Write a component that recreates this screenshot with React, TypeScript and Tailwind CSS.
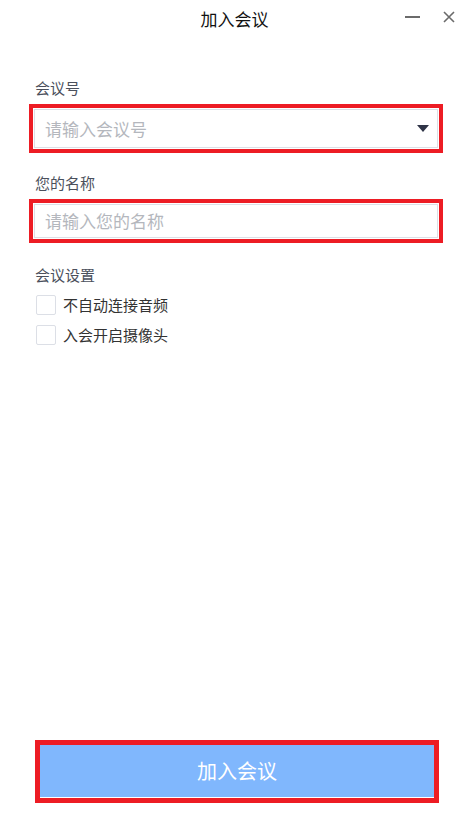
const font = { fontFamily: '"Noto Sans CJK SC", "Noto Sans", sans-serif' };

const Field = ({
  label,
  placeholder,
  tall,
  dropdown,
}: {
  label: string;
  placeholder: string;
  tall?: boolean;
  dropdown?: boolean;
}) => (
  <div className="flex flex-col">
    <span className="pl-[35px] text-[15px] leading-[20px] text-[#4b505c]">{label}</span>
    <div className="mt-[6px] ml-[29px] w-[414px] border-[4px] border-[#ed1c24] p-[1px]">
      <div
        className={`flex items-center justify-between border border-[#dcdfe6] bg-white pl-[10px] pr-[8px] ${
          tall ? "h-[39px]" : "h-[34px]"
        }`}
      >
        <span className="text-[17px] text-[#b4b7bd]">{placeholder}</span>
        {dropdown && (
          <svg width="12" height="7" viewBox="0 0 12 7">
            <path d="M0 0 H12 L6 7 Z" fill="#2f3447" />
          </svg>
        )}
      </div>
    </div>
  </div>
);

const Check = ({ text }: { text: string }) => (
  <div className="flex items-center gap-[7px] pl-[36px]">
    <div className="h-[20px] w-[20px] rounded-[2px] border border-[#dcdfe6] bg-white" />
    <span className="text-[15px] leading-[20px] text-[#333]">{text}</span>
  </div>
);

export default function App() {
  return (
    <div className="flex h-[833px] w-[469px] flex-col bg-white" style={font}>
      <div className="relative flex h-[38px] items-center justify-center">
        <span className="text-[17px] text-[#111]">加入会议</span>
        <div className="absolute right-[14px] top-[11px] flex items-center gap-[23px]">
          <div className="h-[2px] w-[15px] bg-[#6b6b6b]" />
          <svg width="12" height="12" viewBox="0 0 12 12">
            <path d="M1 1 L11 11 M11 1 L1 11" stroke="#6b6b6b" strokeWidth="1.6" />
          </svg>
        </div>
      </div>

      <div className="mt-[40px]">
        <Field label="会议号" placeholder="请输入会议号" tall dropdown />
      </div>
      <div className="mt-[20px]">
        <Field label="您的名称" placeholder="请输入您的名称" />
      </div>

      <div className="mt-[22px] flex flex-col gap-[10px]">
        <span className="pl-[35px] text-[15px] leading-[20px] text-[#4b505c]">会议设置</span>
        <div className="flex flex-col gap-[10px]">
          <Check text="不自动连接音频" />
          <Check text="入会开启摄像头" />
        </div>
      </div>

      <div className="flex-1" />

      <div className="mb-[30px] ml-[35px] w-[404px] border-[5px] border-[#ed1c24]">
        <button className="flex h-[53px] w-full items-center justify-center border-b border-white bg-[#80b7fd] text-[20px] text-white">
          加入会议
        </button>
      </div>
    </div>
  );
}
